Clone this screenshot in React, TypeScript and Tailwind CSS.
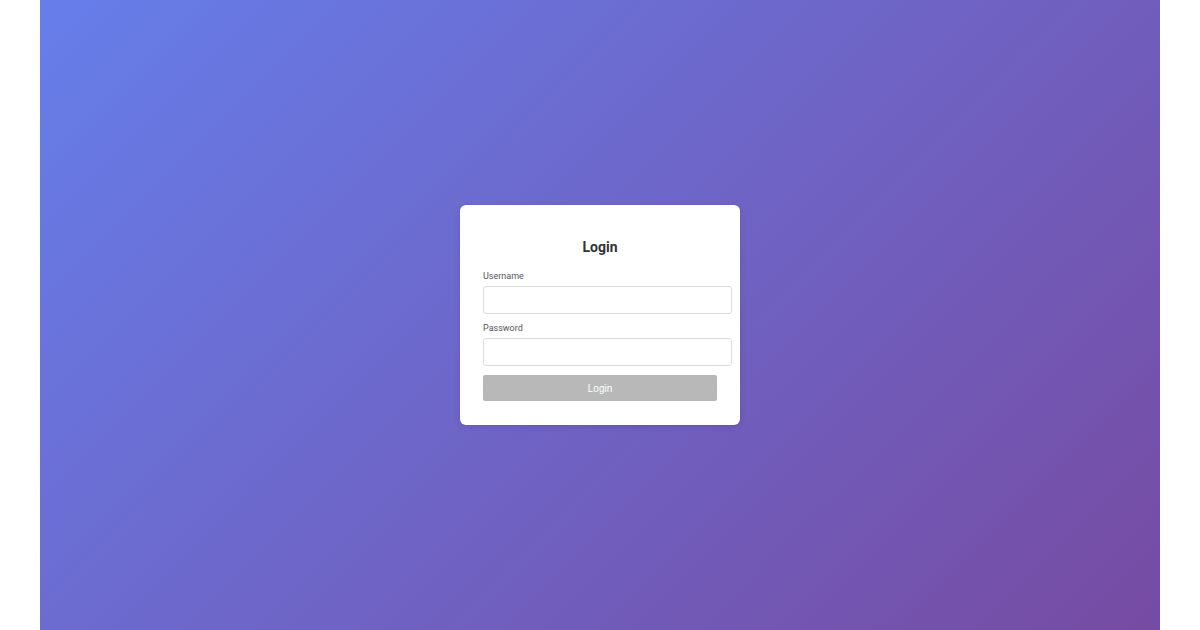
import { useState } from 'react'

type FieldProps = {
  id: string
  label: string
  type: 'text' | 'password'
  value: string
  onChange: (value: string) => void
}

function Field({ id, label, type, value, onChange }: FieldProps) {
  return (
    <div className="mb-2">
      <label htmlFor={id} className="mb-1 block text-[9px] leading-3 text-[#555]">
        {label}
      </label>
      {/* content-box: padding and border are added to the full width */}
      <input
        id={id}
        type={type}
        value={value}
        onChange={(e) => onChange(e.target.value)}
        className="box-content block h-3 w-full rounded-[3px] border border-[#ddd] bg-white py-[7px] pr-[6px] pl-[7px] text-[9px] outline-none focus:border-[#667eea]"
      />
    </div>
  )
}

export default function App() {
  const [username, setUsername] = useState('')
  const [password, setPassword] = useState('')

  return (
    <div className="min-h-screen bg-white px-10 font-[Roboto,sans-serif]">
      <main className="flex min-h-screen items-center justify-center bg-[linear-gradient(135deg,#667eea_0%,#764ba2_100%)]">
        <form
          onSubmit={(e) => e.preventDefault()}
          className="w-full max-w-[280px] rounded-[6px] bg-white px-[23px] pt-8 pb-6 shadow-[0_2px_6px_rgba(0,0,0,0.1)]"
        >
          <h1 className="mb-[13px] text-center text-[14px] leading-5 font-bold text-[#333]">Login</h1>
          <Field id="username" label="Username" type="text" value={username} onChange={setUsername} />
          <Field id="password" label="Password" type="password" value={password} onChange={setPassword} />
          <button
            type="submit"
            disabled={!username || !password}
            className="mt-[9px] block h-[26px] w-full rounded-[2px] bg-[#667eea] font-[Liberation_Sans,Arial,sans-serif] text-[10px] text-white disabled:bg-[#b8b8b8]"
          >
            Login
          </button>
        </form>
      </main>
    </div>
  )
}
